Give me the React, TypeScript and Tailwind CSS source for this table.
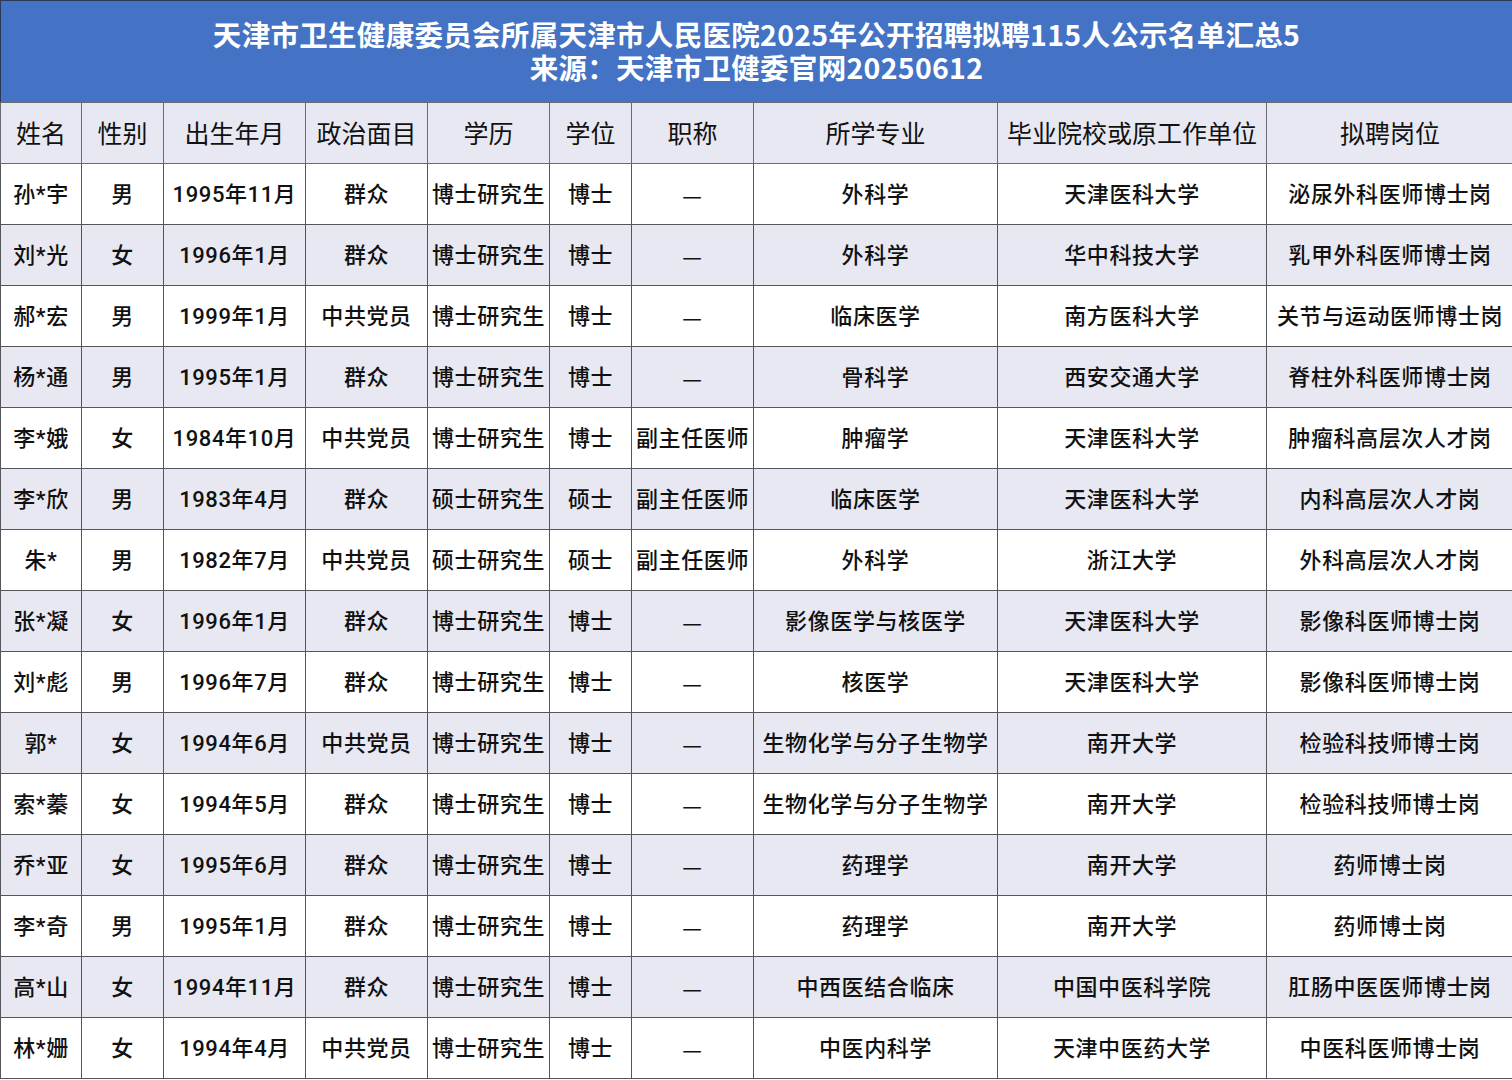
const COLS = "grid-cols-[82px_82px_142px_122px_122px_82px_122px_244px_269px_247px]";

const headers = ["姓名", "性别", "出生年月", "政治面目", "学历", "学位", "职称", "所学专业", "毕业院校或原工作单位", "拟聘岗位"];

const rows: string[][] = [
  ["孙*宇", "男", "1995年11月", "群众", "博士研究生", "博士", "—", "外科学", "天津医科大学", "泌尿外科医师博士岗"],
  ["刘*光", "女", "1996年1月", "群众", "博士研究生", "博士", "—", "外科学", "华中科技大学", "乳甲外科医师博士岗"],
  ["郝*宏", "男", "1999年1月", "中共党员", "博士研究生", "博士", "—", "临床医学", "南方医科大学", "关节与运动医师博士岗"],
  ["杨*通", "男", "1995年1月", "群众", "博士研究生", "博士", "—", "骨科学", "西安交通大学", "脊柱外科医师博士岗"],
  ["李*娥", "女", "1984年10月", "中共党员", "博士研究生", "博士", "副主任医师", "肿瘤学", "天津医科大学", "肿瘤科高层次人才岗"],
  ["李*欣", "男", "1983年4月", "群众", "硕士研究生", "硕士", "副主任医师", "临床医学", "天津医科大学", "内科高层次人才岗"],
  ["朱*", "男", "1982年7月", "中共党员", "硕士研究生", "硕士", "副主任医师", "外科学", "浙江大学", "外科高层次人才岗"],
  ["张*凝", "女", "1996年1月", "群众", "博士研究生", "博士", "—", "影像医学与核医学", "天津医科大学", "影像科医师博士岗"],
  ["刘*彪", "男", "1996年7月", "群众", "博士研究生", "博士", "—", "核医学", "天津医科大学", "影像科医师博士岗"],
  ["郭*", "女", "1994年6月", "中共党员", "博士研究生", "博士", "—", "生物化学与分子生物学", "南开大学", "检验科技师博士岗"],
  ["索*蓁", "女", "1994年5月", "群众", "博士研究生", "博士", "—", "生物化学与分子生物学", "南开大学", "检验科技师博士岗"],
  ["乔*亚", "女", "1995年6月", "群众", "博士研究生", "博士", "—", "药理学", "南开大学", "药师博士岗"],
  ["李*奇", "男", "1995年1月", "群众", "博士研究生", "博士", "—", "药理学", "南开大学", "药师博士岗"],
  ["高*山", "女", "1994年11月", "群众", "博士研究生", "博士", "—", "中西医结合临床", "中国中医科学院", "肛肠中医医师博士岗"],
  ["林*姗", "女", "1994年4月", "中共党员", "博士研究生", "博士", "—", "中医内科学", "天津中医药大学", "中医科医师博士岗"],
];

export default function App() {
  return (
    <div className="w-[1512px] h-[1080px] bg-white overflow-hidden font-['Roboto','Noto_Sans_CJK_SC',sans-serif]">
      {/* 标题 */}
      <div className="h-[102px] bg-[#4472c4] border-t border-l border-[#2d3a55] flex flex-col items-center justify-center pb-1 font-['Noto_Sans_CJK_SC',sans-serif] font-bold text-white text-[28.5px] tracking-[0.3px]">
        <div className="h-[33px] leading-[33px]">天津市卫生健康委员会所属天津市人民医院2025年公开招聘拟聘115人公示名单汇总5</div>
        <div className="h-[33px] leading-[33px]">来源：天津市卫健委官网20250612</div>
      </div>

      {/* 表头 */}
      <div className={`grid ${COLS} bg-[#e8e8f2] border-t border-[#6a6a72]`}>
        {headers.map((h, i) => (
          <div
            key={h}
            className={`h-[61px] flex items-center justify-center border-r border-b border-[#6a6a72] text-[25px] text-[#111] font-['Noto_Sans_CJK_SC',serif] font-normal whitespace-nowrap ${i === 0 ? "border-l" : ""}`}
          >
            {h}
          </div>
        ))}
      </div>

      {rows.map((r, ri) => (
        <div key={ri} className={`grid ${COLS} ${ri % 2 === 1 ? "bg-[#e8e8f2]" : "bg-white"}`}>
          {r.map((c, ci) => (
            <div
              key={ci}
              className={`h-[61px] flex items-center justify-center border-r border-b border-[#55555c] text-[22px] tracking-[0.6px] text-[#111] font-medium whitespace-nowrap ${ci === 0 ? "border-l" : ""} ${c === "—" ? "font-['Noto_Sans_CJK_SC',sans-serif] font-normal" : ""}`}
            >
              {c}
            </div>
          ))}
        </div>
      ))}
    </div>
  );
}
